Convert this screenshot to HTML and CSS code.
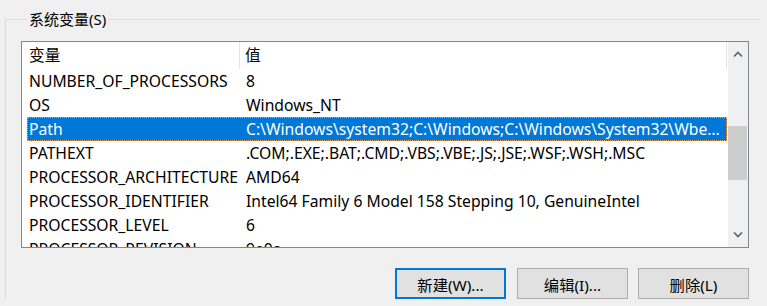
FILE: index.html
```html
<!DOCTYPE html>
<html lang="zh-CN">
<head>
  <meta charset="UTF-8">
  <title>系统变量</title>
  <link rel="stylesheet" href="styles.css">
</head>
<body>
  <fieldset class="group">
    <legend>系统变量(S)</legend>

    <div class="listbox">
      <div class="table">
        <div class="head">
          <div class="col name">变量</div>
          <div class="col value">值</div>
        </div>
        <div class="row"><div class="cell name">NUMBER_OF_PROCESSORS</div><div class="cell value">8</div></div>
        <div class="row"><div class="cell name">OS</div><div class="cell value">Windows_NT</div></div>
        <div class="row selected"><div class="cell name">Path</div><div class="cell value">C:\Windows\system32;C:\Windows;C:\Windows\System32\Wbem;C:\Windows\System32\WindowsPowerShell\v1.0\</div></div>
        <div class="row"><div class="cell name">PATHEXT</div><div class="cell value">.COM;.EXE;.BAT;.CMD;.VBS;.VBE;.JS;.JSE;.WSF;.WSH;.MSC</div></div>
        <div class="row"><div class="cell name">PROCESSOR_ARCHITECTURE</div><div class="cell value">AMD64</div></div>
        <div class="row"><div class="cell name">PROCESSOR_IDENTIFIER</div><div class="cell value">Intel64 Family 6 Model 158 Stepping 10, GenuineIntel</div></div>
        <div class="row"><div class="cell name">PROCESSOR_LEVEL</div><div class="cell value">6</div></div>
        <div class="row"><div class="cell name">PROCESSOR_REVISION</div><div class="cell value">9e0a</div></div>
      </div>

      <!-- vertical scrollbar -->
      <div class="scrollbar">
        <div class="arrow">
          <svg width="10" height="6" viewBox="0 0 10 6"><path d="M1 5.5 L5 1.5 L9 5.5" fill="none" stroke="#606060" stroke-width="1.6"/></svg>
        </div>
        <div class="track"><div class="thumb"></div></div>
        <div class="arrow">
          <svg width="10" height="6" viewBox="0 0 10 6"><path d="M1 0.5 L5 4.5 L9 0.5" fill="none" stroke="#606060" stroke-width="1.6"/></svg>
        </div>
      </div>
    </div>

    <div class="buttons">
      <button class="btn default">新建(W)...</button>
      <button class="btn">编辑(I)...</button>
      <button class="btn">删除(L)</button>
    </div>
  </fieldset>
</body>
</html>
```

FILE: styles.css
```css
/* Window background */
body {
  margin: 0;
  padding-top: 9px;
  background-color: #f0f0f0;
  color: #000;
  font-family: "Noto Sans", "Noto Sans CJK SC", sans-serif;
  font-size: 15.7px;
  overflow: hidden;
}

/* Group box */
.group {
  margin: 0 7px 0 5px;
  padding: 12px 0 0 15px;
  border: 1px solid #dcdcdc;
  border-right: none;
  border-bottom: none;
  min-width: 0;
}

.group legend {
  margin-left: 6px;
  padding: 0 2px;
  font-size: 15px;
  line-height: 20px;
}

/* List view */
.listbox {
  display: flex;
  width: 726px;
  height: 205px;
  border: 1px solid #828790;
  background-color: #fff;
}

.table {
  width: 706px;
  overflow: hidden;
}

.head {
  display: flex;
  height: 27px;
  line-height: 27px;
}

.head .col {
  padding-left: 7px;
  border-right: 1px solid #e5e5e5;
  box-sizing: border-box;
}

.head .name {
  width: 218px;
}

.head .value {
  width: 487px;
  padding-left: 5px;
}

.row {
  display: flex;
  height: 24px;
  line-height: 24px;
  margin: 0 1px 0 5px;
  white-space: nowrap;
}

.row .name {
  width: 213px;
  padding-left: 2px;
  box-sizing: border-box;
  flex-shrink: 0;
}

.row .value {
  flex: 1;
  min-width: 0;
  padding: 0 6px 0 6px;
  overflow: hidden;
  text-overflow: ellipsis;
}

.row.selected {
  background-color: #0078d7;
  color: #fff;
  outline: 1px dotted #f0a050;
  outline-offset: -1px;
}

/* Scrollbar */
.scrollbar {
  width: 20px;
  display: flex;
  flex-direction: column;
  background-color: #f0f0f0;
}

.arrow {
  height: 24px;
  display: flex;
  justify-content: center;
  align-items: center;
}

.track {
  flex: 1;
}

.thumb {
  margin: 60px 1px 0 0;
  height: 54px;
  background-color: #cdcdcd;
}

/* Buttons */
.buttons {
  display: flex;
  justify-content: flex-end;
  margin-top: 20px;
  padding-right: 11px;
}

.btn {
  width: 111px;
  height: 31px;
  margin-left: 10px;
  padding: 0;
  border: 1px solid #adadad;
  background-color: #e1e1e1;
  color: #000;
  font-family: inherit;
  font-size: 15.3px;
}

.btn.default {
  border: 2px solid #0078d7;
  margin-right: 1px;
}
```
